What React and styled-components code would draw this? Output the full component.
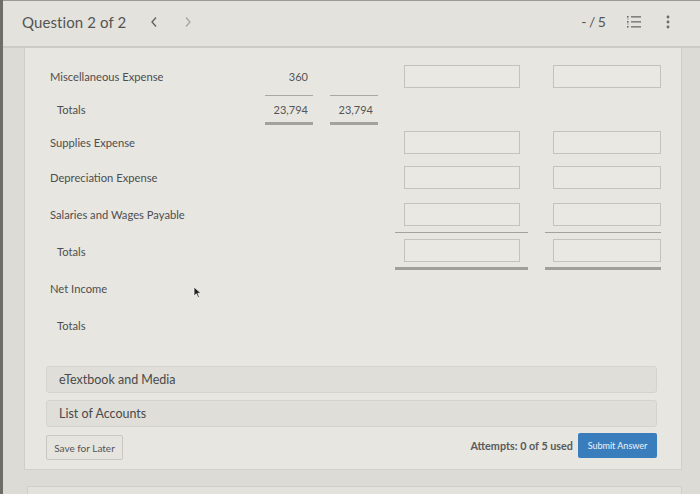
import React from "react";
import styled, { createGlobalStyle } from "styled-components";

const Global = createGlobalStyle`
  html, body { margin: 0; padding: 0; }
  body { font-family: Lato, "Open Sans", sans-serif; background: #dcdbd5; }
  #root { width: 700px; height: 494px; overflow: hidden; }
`;

const Frame = styled.div`
  position: relative;
  width: 700px;
  height: 494px;
  box-sizing: border-box;
  border-left: 3px solid #6e6d69;
  background: #dcdbd5;
  display: flex;
  flex-direction: column;
  overflow: hidden;
`;

const Header = styled.header`
  height: 48px;
  flex: none;
  box-sizing: border-box;
  border-top: 1px solid #9a9994;
  border-bottom: 2px solid #cccbc5;
  background: #e3e2dd;
  display: flex;
  align-items: center;
  padding: 0 30px 4px 19px;
`;

const Title = styled.div`
  font-size: 15px;
  color: #545454;
  letter-spacing: 0.1px;
`;

const NavBtn = styled.span`
  display: inline-flex;
  margin-left: ${(p) => p.$ml}px;
  color: ${(p) => (p.$disabled ? "#a5a5a2" : "#5f5f5f")};
`;

const Spacer = styled.div`
  flex: 1;
`;

const Score = styled.div`
  font-size: 14px;
  color: #555;
  word-spacing: -1px;
  margin-right: 21px;
`;

const IconWrap = styled.span`
  display: inline-flex;
  color: #6a6a6a;
  margin-right: ${(p) => p.$mr || 0}px;
`;

const Body = styled.div`
  flex: 1;
  display: flex;
  flex-direction: column;
  padding: 0 18px 0 21px;
`;

const Panel = styled.section`
  background: #e7e6e1;
  border: 1px solid #d0cfc9;
  border-top: none;
  padding: 11px 24px 9px 21px;
  display: flex;
  flex-direction: column;
`;

const Row = styled.div`
  display: grid;
  grid-template-columns: 202px 48px 48px 133px 116px;
  column-gap: 17px;
  height: ${(p) => p.$h}px;
  align-items: center;
`;

const Label = styled.div`
  font-size: 11.2px;
  color: #4e4e4e;
  padding-left: ${(p) => (p.$indent ? 11 : 4)}px;
`;

const Num = styled.div`
  align-self: stretch;
  display: flex;
  align-items: center;
  justify-content: flex-end;
  padding-right: 5px;
  font-size: 11px;
  color: #555;
  box-sizing: border-box;
  margin-top: ${(p) => (p.$rule ? 2 : 0)}px;
  border-top: ${(p) => (p.$rule ? "1.5px solid #a9a8a4" : "none")};
  border-bottom: ${(p) => (p.$rule ? "3px solid #a3a29e" : "none")};
`;

const InputCell = styled.div`
  align-self: stretch;
  display: flex;
  align-items: center;
  box-sizing: border-box;
  padding: 0 ${(p) => p.$pr}px 0 ${(p) => p.$pl}px;
  border-top: ${(p) => (p.$rule ? "1.5px solid #a3a29e" : "none")};
  border-bottom: ${(p) => (p.$rule ? "3px solid #a09f9b" : "none")};
`;

const Box = styled.div`
  width: 100%;
  height: 23px;
  box-sizing: border-box;
  border: 1.5px solid #c3c2bc;
  background: #e9e8e3;
`;

const Bar = styled.div`
  height: 27px;
  box-sizing: border-box;
  border: 1px solid #d4d3cd;
  border-radius: 3px;
  background: #dfded8;
  display: flex;
  align-items: center;
  padding-left: 12px;
  font-size: 12.5px;
  color: #4a4a4a;
  margin-top: ${(p) => p.$mt}px;
`;

const Footer = styled.div`
  display: flex;
  align-items: center;
  margin-top: 6px;
  height: 27px;
`;

const SaveBtn = styled.button`
  width: 77px;
  height: 25px;
  margin-top: 2px;
  border: 1px solid #c8c7c1;
  border-radius: 2px;
  background: #e5e4df;
  font-family: Lato, sans-serif;
  font-size: 10px;
  color: #555;
  padding: 0;
`;

const Attempts = styled.div`
  font-size: 10.8px;
  font-weight: 700;
  color: #5a5a5a;
  margin-right: 5px;
  margin-top: -2px;
`;

const Submit = styled.button`
  width: 79px;
  height: 25px;
  border: none;
  border-radius: 2px;
  background: #3a7dbc;
  color: #eef3f8;
  font-family: Lato, sans-serif;
  font-size: 9px;
  padding: 0;
  margin-top: -2px;
`;

const NextCard = styled.div`
  margin: 16px 0 0 3px;
  flex: 1;
  border: 1px solid #cfcec8;
  border-bottom: none;
  background: #e3e2dd;
`;

const Cursor = styled.svg`
  position: absolute;
  left: 190px;
  top: 286px;
`;

const rows = [
  { label: "Miscellaneous Expense", h: 34, n1: "360", inputs: true },
  { label: "Totals", indent: true, h: 32, n1: "23,794", n2: "23,794", numRule: true },
  { label: "Supplies Expense", h: 34, inputs: true },
  { label: "Depreciation Expense", h: 37, inputs: true },
  { label: "Salaries and Wages Payable", h: 36, inputs: true },
  { label: "Totals", indent: true, h: 38, inputs: true, inRule: true },
  { label: "Net Income", h: 37 },
  { label: "Totals", indent: true, h: 37 },
];

const Chevron = ({ left }) => (
  <svg width="8" height="12" viewBox="0 0 8 12">
    <path
      d={left ? "M6 1.5 L2 6 L6 10.5" : "M2 1.5 L6 6 L2 10.5"}
      fill="none"
      stroke="currentColor"
      strokeWidth="1.3"
    />
  </svg>
);

const ListIcon = () => (
  <svg width="14" height="14" viewBox="0 0 14 14">
    <g fill="currentColor">
      <rect x="0" y="1" width="1.6" height="1.6" />
      <rect x="0" y="6" width="1.6" height="1.6" />
      <rect x="0" y="11" width="1.6" height="1.6" />
      <rect x="4" y="1.2" width="10" height="1.3" />
      <rect x="4" y="6.2" width="10" height="1.3" />
      <rect x="4" y="11.2" width="10" height="1.3" />
      <rect x="0" y="3.5" width="1.6" height="1" opacity="0.6" />
      <rect x="0" y="8.5" width="1.6" height="1" opacity="0.6" />
    </g>
  </svg>
);

const Kebab = () => (
  <svg width="4" height="14" viewBox="0 0 4 14">
    <g fill="currentColor">
      <circle cx="2" cy="2" r="1.4" />
      <circle cx="2" cy="7" r="1.4" />
      <circle cx="2" cy="12" r="1.4" />
    </g>
  </svg>
);

export default function App() {
  return (
    <>
      <Global />
      <Frame>
        <Header>
          <Title>Question 2 of 2</Title>
          <NavBtn $ml={24}>
            <Chevron left />
          </NavBtn>
          <NavBtn $ml={26} $disabled>
            <Chevron />
          </NavBtn>
          <Spacer />
          <Score>- / 5</Score>
          <IconWrap $mr={25}>
            <ListIcon />
          </IconWrap>
          <IconWrap>
            <Kebab />
          </IconWrap>
        </Header>
        <Body>
          <Panel>
            {rows.map((r, i) => (
              <Row key={i} $h={r.h}>
                <Label $indent={r.indent}>{r.label}</Label>
                <Num $rule={r.numRule}>{r.n1 || ""}</Num>
                <Num $rule={r.numRule}>{r.n2 || ""}</Num>
                <InputCell $pl={9} $pr={8} $rule={r.inRule}>
                  {r.inputs && <Box />}
                </InputCell>
                <InputCell $pl={8} $pr={0} $rule={r.inRule}>
                  {r.inputs && <Box />}
                </InputCell>
              </Row>
            ))}
            <Bar $mt={22}>eTextbook and Media</Bar>
            <Bar $mt={7}>List of Accounts</Bar>
            <Footer>
              <SaveBtn>Save for Later</SaveBtn>
              <Spacer />
              <Attempts>Attempts: 0 of 5 used</Attempts>
              <Submit>Submit Answer</Submit>
            </Footer>
          </Panel>
          <NextCard />
        </Body>
        <Cursor width="9" height="13" viewBox="0 0 9 13">
          <path d="M1 1 L1 10 L3.3 7.8 L5 11.6 L6.4 11 L4.8 7.3 L8 7.3 Z" fill="#222" stroke="#f4f4f4" strokeWidth="0.8" />
        </Cursor>
      </Frame>
    </>
  );
}
